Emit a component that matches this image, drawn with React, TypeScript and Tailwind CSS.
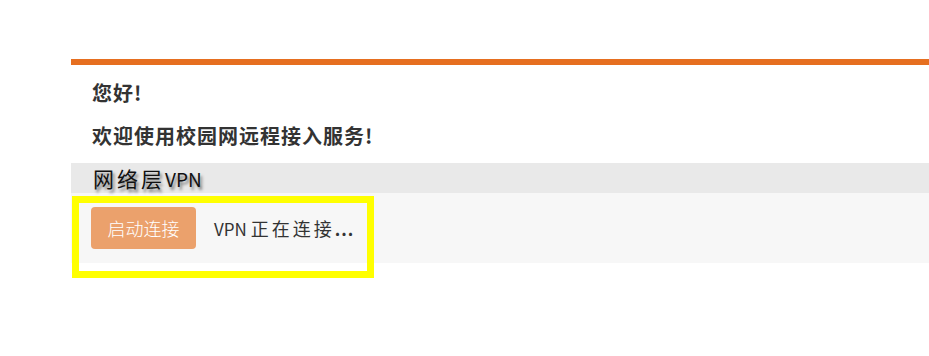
const CJK = "font-['Noto_Sans_CJK_SC','Noto_Sans',sans-serif]";

export default function App() {
  return (
    <div className={`min-h-[356px] bg-white pt-[59px] pl-[71px] ${CJK}`}>
      <div className="relative border-t-[6px] border-[#e66f20]">
        <div className="px-[21px] pt-[14px] text-[#333]">
          <p className="h-[28px] text-[20px] font-bold leading-[28px] tracking-[1px]">您好!</p>
          <p className="mt-[15px] h-[28px] text-[20px] font-bold leading-[28px] tracking-[1px]">
            欢迎使用校园网远程接入服务!
          </p>
        </div>

        <div className="mt-[13px] h-[30px] bg-[#e9e9e9] pl-[22px] leading-[30px] text-[#111] [text-shadow:2px_3px_3px_#7a7a7a]">
          <span className="text-[21px] tracking-[3px]">网络层</span>
          <span className="text-[19px]">VPN</span>
        </div>

        <div className="flex h-[70px] items-center bg-[#f7f7f7] pl-[20px]">
          <button className="h-[42px] w-[105px] rounded-[4px] bg-[#eba16c] text-[18px] font-light text-white">
            启动连接
          </button>
          <span className="ml-[18px] text-[17px] text-[#333]">
            VPN <span className="text-[18px] tracking-[3px]">正在连接</span>
            <span className="font-bold tracking-[1px]">...</span>
          </span>
        </div>

        {/* 标注框 */}
        <div className="pointer-events-none absolute left-[1px] top-[131px] h-[82px] w-[302px] border-[7px] border-[#ffff00]" />
      </div>
    </div>
  );
}
